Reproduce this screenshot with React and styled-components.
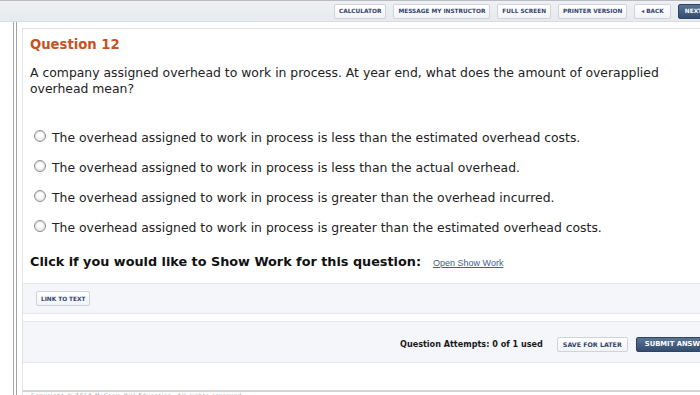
import * as React from 'react';
import styled, { createGlobalStyle } from 'styled-components';

const GlobalStyle = createGlobalStyle`
  html, body {
    margin: 0;
    padding: 0;
    background: #ffffff;
    overflow: hidden;
  }
  body {
    width: 700px;
    height: 395px;
    font-family: "DejaVu Sans", Verdana, sans-serif;
    color: #222;
  }
`;

const Page = styled.div`
  width: 700px;
  height: 395px;
  display: flex;
  flex-direction: column;
  overflow: hidden;
`;

const TopBar = styled.div`
  flex: 0 0 auto;
  height: 20px;
  width: 714px;
  display: flex;
  justify-content: flex-end;
  align-items: center;
  gap: 7px;
  background: linear-gradient(#eef0f3, #e7eaee);
  border-top: 1px solid #b8bcc3;
  border-bottom: 1px solid #d9dce1;
`;

const BarButton = styled.span`
  flex: 0 0 auto;
  display: inline-flex;
  align-items: center;
  height: 13px;
  padding: 0 ${(p) => p.$pad || 4}px;
  font-size: ${(p) => p.$size || 5.8}px;
  font-weight: bold;
  color: ${(p) => (p.$dark ? '#ffffff' : '#33446a')};
  background: ${(p) => (p.$dark ? 'linear-gradient(#5b7494, #344c6e)' : 'linear-gradient(#ffffff, #f1f3f6)')};
  border: 1px solid ${(p) => (p.$dark ? '#2f4463' : '#cfd3da')};
  border-radius: 2px;
  white-space: nowrap;
`;

const Body = styled.div`
  flex: 1 1 auto;
  display: flex;
  flex-direction: column;
  margin-left: 13px;
  border-left: 4px double #a3a3a3;
  padding-left: 5px;
  padding-top: 6px;
`;

const Panel = styled.div`
  width: 700px;
  border: 1px solid #dfe2e7;
  border-right: none;
  border-bottom: none;
  padding: 7px 0 0 7px;
  height: 361px;
  display: flex;
  flex-direction: column;
`;

const Title = styled.h2`
  margin: 1px 0 13px 0;
  font-size: 13.2px;
  font-weight: bold;
  color: #c9521f;
`;

const Prompt = styled.p`
  margin: 0 0 32px 0;
  width: 660px;
  font-size: 12.4px;
  line-height: 16px;
`;

const Options = styled.div`
  display: flex;
  flex-direction: column;
  gap: 13px;
  padding-left: 4px;
  margin-bottom: 18px;
`;

const Option = styled.label`
  display: flex;
  align-items: center;
  gap: 6px;
  height: 17px;
  font-size: 12.4px;
`;

const Radio = styled.span`
  flex: 0 0 auto;
  width: 10px;
  height: 10px;
  border-radius: 50%;
  border: 1px solid #8f8f8f;
  background: radial-gradient(circle at 50% 35%, #ffffff 30%, #d6d6d6 100%);
  box-shadow: inset 0 1px 1px rgba(0, 0, 0, 0.15);
  margin-top: -4px;
`;

const ShowWork = styled.div`
  display: flex;
  align-items: baseline;
  gap: 12px;
  font-size: 12.8px;
  font-weight: bold;
  color: #111;
  margin-bottom: 14px;
`;

const SmallLink = styled.a`
  font-family: "Liberation Sans", Arial, sans-serif;
  font-size: 9px;
  font-weight: normal;
  color: #3d5f8f;
  text-decoration: underline;
`;

const LinkBox = styled.div`
  height: 29px;
  margin-left: -7px;
  padding-left: 13px;
  display: flex;
  align-items: center;
  background: #f4f6fa;
  border-top: 1px solid #e4e7ec;
  border-bottom: 1px solid #e4e7ec;
  margin-bottom: 7px;
`;

const AttemptsBox = styled.div`
  height: 36px;
  margin-left: -7px;
  padding-top: 4px;
  display: flex;
  align-items: center;
  padding-left: 377px;
  background: #f4f6fa;
  border-top: 1px solid #e4e7ec;
  border-bottom: 1px solid #e4e7ec;
`;

const Attempts = styled.span`
  font-size: 8.1px;
  font-weight: bold;
  color: #1a1a1a;
  margin-right: 14px;
`;

const Spacer = styled.span`
  width: 8px;
  flex: 0 0 auto;
`;

const Footer = styled.div`
  margin-top: auto;
  margin-left: -7px;
  border-top: 2px solid #d6d6d6;
  height: 5px;
  font-size: 5px;
  line-height: 6px;
  color: #999;
  padding-left: 8px;
  letter-spacing: 1px;
  overflow: hidden;
`;

const BottomBar = styled.div`
  flex: 0 0 auto;
  height: 3px;
  background: linear-gradient(90deg, #b9b9b9 0, #b9b9b9 230px, #d4d4d4 230px);
`;

const options = [
  'The overhead assigned to work in process is less than the estimated overhead costs.',
  'The overhead assigned to work in process is less than the actual overhead.',
  'The overhead assigned to work in process is greater than the overhead incurred.',
  'The overhead assigned to work in process is greater than the estimated overhead costs.',
];

export default function App() {
  return (
    <Page>
      <GlobalStyle />
      <TopBar>
        <BarButton>CALCULATOR</BarButton>
        <BarButton>MESSAGE MY INSTRUCTOR</BarButton>
        <BarButton>FULL SCREEN</BarButton>
        <BarButton>PRINTER VERSION</BarButton>
        <BarButton $pad={6}>&#9666; BACK</BarButton>
        <BarButton $dark $pad={6}>NEXT &#9656;</BarButton>
      </TopBar>
      <Body>
        <Panel>
          <Title>Question 12</Title>
          <Prompt>
            A company assigned overhead to work in process. At year end, what does the amount of overapplied overhead mean?
          </Prompt>
          <Options>
            {options.map((o) => (
              <Option key={o}>
                <Radio />
                {o}
              </Option>
            ))}
          </Options>
          <ShowWork>
            Click if you would like to Show Work for this question:
            <SmallLink href="#">Open Show Work</SmallLink>
          </ShowWork>
          <LinkBox>
            <BarButton>LINK TO TEXT</BarButton>
          </LinkBox>
          <AttemptsBox>
            <Attempts>Question Attempts: 0 of 1 used</Attempts>
            <BarButton $pad={5} $size={6.3}>SAVE FOR LATER</BarButton>
            <Spacer />
            <BarButton $dark $pad={8} $size={6.8}>SUBMIT ANSWER</BarButton>
          </AttemptsBox>
          <Footer>Copyright © 2016 McGraw-Hill Education. All rights reserved.</Footer>
        </Panel>
      </Body>
      <BottomBar />
    </Page>
  );
}
